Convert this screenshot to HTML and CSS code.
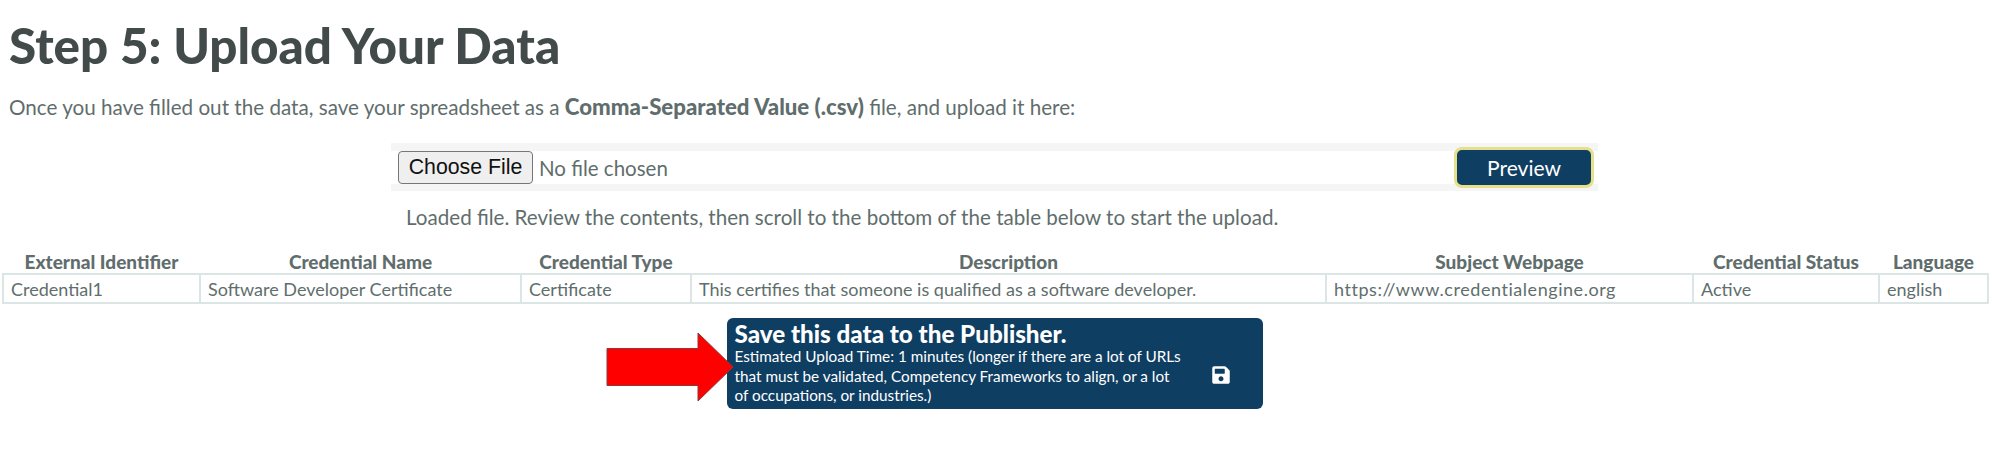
FILE: index.html
```html
<!DOCTYPE html>
<html>
<head>
  <meta charset="utf-8">
  <meta name="viewport" content="width=device-width">
  <title>Step 5: Upload Your Data</title>
  <link rel="stylesheet" href="styles.css">
</head>
<body>

  <h1 class="step-title">Step 5: Upload Your Data</h1>

  <p class="step-text">Once you have filled out the data, save your spreadsheet as a <b>Comma-Separated Value (.csv)</b> file, and upload it here:</p>

  <div class="file-box">
    <div class="file-row">
      <button class="choose-button">Choose File</button>
      <span class="file-name">No file chosen</span>
      <button class="preview-button">Preview</button>
    </div>
  </div>

  <p class="loaded-text">Loaded file. Review the contents, then scroll to the bottom of the table below to start the upload.</p>

  <table class="preview-table">
    <colgroup>
      <col class="col1"><col class="col2"><col class="col3"><col class="col4"><col class="col5"><col class="col6"><col class="col7">
    </colgroup>
    <thead>
      <tr>
        <th>External Identifier</th>
        <th>Credential Name</th>
        <th>Credential Type</th>
        <th>Description</th>
        <th>Subject Webpage</th>
        <th>Credential Status</th>
        <th>Language</th>
      </tr>
    </thead>
    <tbody>
      <tr>
        <td>Credential1</td>
        <td>Software Developer Certificate</td>
        <td>Certificate</td>
        <td>This certifies that someone is qualified as a software developer.</td>
        <td class="url-cell">https://www.credentialengine.org</td>
        <td>Active</td>
        <td>english</td>
      </tr>
    </tbody>
  </table>

  <div class="save-area">
    <button class="save-button">
      <span class="save-copy">
        <strong class="save-title">Save this data to the Publisher.</strong>
        <span class="save-note">Estimated Upload Time: 1 minutes (longer if there are a lot of URLs that must be validated, Competency Frameworks to align, or a lot of occupations, or industries.)</span>
      </span>
      <svg class="save-icon" viewBox="0 0 448 512"><path fill="#fff" d="M433.9 129.9l-83.9-83.9A48 48 0 0 0 316.1 32H48C21.5 32 0 53.5 0 80v352c0 26.500 21.500 48 48 48h352c26.500 0 48-21.500 48-48V163.900a48 48 0 0 0-14.100-34zM224 416c-35.300 0-64-28.700-64-64s28.700-64 64-64 64 28.700 64 64-28.700 64-64 64zm96-304.500V212c0 6.600-5.400 12-12 12H76c-6.600 0-12-5.400-12-12V108c0-6.600 5.400-12 12-12h228.500c3.200 0 6.200 1.300 8.500 3.500l3.500 3.500c2.300 2.300 3.500 5.300 3.500 8.500z"/></svg>
    </button>
    <svg class="red-arrow" viewBox="0 0 128 70"><path fill="#fe0000" stroke="#8a3a3a" stroke-width="1" d="M1 16.500H92V1L127 35 92 69V53.500H1z"/></svg>
  </div>

</body>
</html>
```

FILE: styles.css
```css
html, body {
  margin: 0;
  padding: 0;
  background: #fff;
  font-family: Lato, "Open Sans", Arial, sans-serif;
  color: #5f6e6d;
}

body {
  width: 1989px;
  height: 454px;
  overflow: hidden;
}

.step-title {
  margin: 0 0 0 9px;
  padding-top: 16px;
  font-size: 49.4px;
  line-height: 58px;
  font-weight: 900;
  color: #424a4a;
}

.step-text {
  margin: 21px 0 0 9px;
  font-size: 20.65px;
  line-height: 24px;
}

.step-text b {
  font-size: 22.2px;
  font-weight: 900;
}

.file-box {
  width: 1207px;
  margin: 24px auto 0;
  padding: 8px 0 7px;
  background: #f5f5f5;
}

.file-row {
  display: flex;
  align-items: center;
  height: 33px;
  background: #fff;
}

.choose-button {
  width: 135px;
  height: 33px;
  margin-left: 7px;
  padding: 0;
  border: 1px solid #767676;
  border-radius: 4px;
  background: #efefef;
  color: #111;
  font-family: "Liberation Sans", Arial, sans-serif;
  font-size: 21.3px;
}

.file-name {
  margin-left: 6px;
  font-size: 20.5px;
}

.preview-button {
  width: 140px;
  height: 41px;
  margin-left: auto;
  margin-right: 4px;
  border: 3px solid #e6df8c;
  border-radius: 8px;
  background: #0f3e63;
  color: #fff;
  font-family: Lato, Arial, sans-serif;
  font-size: 21px;
}

.loaded-text {
  margin: 14px 0 0 406px;
  font-size: 20.6px;
  line-height: 24px;
}

.preview-table {
  width: 1985px;
  margin: 20px 0 0 2px;
  border-collapse: collapse;
  table-layout: fixed;
  font-size: 18px;
}

.col1 { width: 197px; }
.col2 { width: 321px; }
.col3 { width: 170px; }
.col4 { width: 635px; }
.col5 { width: 367px; }
.col6 { width: 186px; }
.col7 { width: 109px; }

.preview-table th {
  padding: 0;
  height: 24px;
  font-size: 19px;
  font-weight: 900;
  text-align: center;
  white-space: nowrap;
}

.preview-table td {
  height: 27px;
  padding: 0 7px;
  border: 2px solid #dce5e5;
  white-space: nowrap;
}

.preview-table .url-cell {
  letter-spacing: 0.55px;
}

.save-area {
  position: relative;
  width: 536px;
  margin: 14px auto 0;
}

.save-button {
  display: flex;
  align-items: center;
  width: 536px;
  height: 91px;
  padding: 0 33px 0 8px;
  border: none;
  border-radius: 6px;
  background: #0f3e63;
  color: #fff;
  font-family: Lato, Arial, sans-serif;
  text-align: left;
}

.save-copy {
  display: block;
  width: 448px;
}

.save-title {
  display: block;
  font-size: 24.2px;
  line-height: 26px;
  font-weight: 900;
}

.save-note {
  display: block;
  font-size: 15.3px;
  line-height: 19.5px;
}

.save-icon {
  width: 18px;
  height: 20px;
  margin-left: auto;
  margin-top: 22px;
}

.red-arrow {
  position: absolute;
  top: 14px;
  left: -121px;
  width: 128px;
  height: 70px;
}
```
